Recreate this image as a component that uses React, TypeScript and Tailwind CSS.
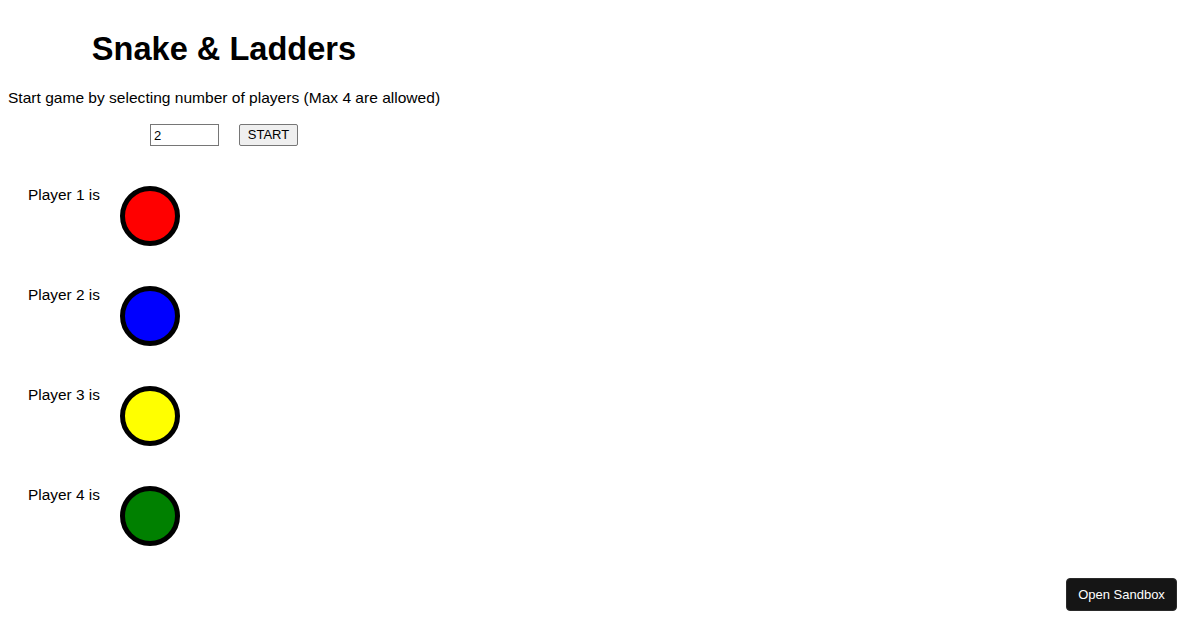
import { useState } from "react";

const PLAYERS = [
  { id: 1, color: "bg-[#ff0000]" },
  { id: 2, color: "bg-[#0000ff]" },
  { id: 3, color: "bg-[#ffff00]" },
  { id: 4, color: "bg-[#008000]" },
];

export default function App() {
  const [count, setCount] = useState("2");

  return (
    <div className="min-h-[630px] bg-white p-2 font-['Liberation_Sans',Arial,sans-serif] text-black">
      <div className="w-[432px] text-center">
        <h1 className="mt-[22px] text-[32.6px] leading-[37px] font-bold whitespace-nowrap">Snake &amp; Ladders</h1>
        <p className="mt-[22px] text-[15.55px] leading-[18px] whitespace-nowrap">
          Start game by selecting number of players (Max 4 are allowed)
        </p>
        <div className="mt-[17px] flex items-center justify-center gap-5">
          <input
            type="number"
            value={count}
            onChange={(e) => setCount(e.target.value)}
            className="h-[22px] w-[69px] border border-[#767676] px-[3px] text-[13px] outline-none [appearance:textfield]"
          />
          <button
            type="button"
            className="h-[22px] w-[59px] rounded-[2px] border border-[#767676] bg-[#efefef] pb-[1px] text-[13px] leading-none"
          >
            START
          </button>
        </div>
      </div>

      {/* Player tokens */}
      <div className="mt-10 flex flex-col gap-10 pl-5">
        {PLAYERS.map((p) => (
          <div key={p.id} className="flex items-start gap-5">
            <span className="w-[72px] text-[15.4px] leading-[18px] whitespace-nowrap">Player {p.id} is</span>
            <div className={`size-[60px] rounded-full border-[5px] border-black ${p.color}`} />
          </div>
        ))}
      </div>

      <button
        type="button"
        className="fixed right-[23px] bottom-[19px] h-[33px] w-[111px] rounded-[4px] border border-[#2a2a2a] bg-[#151515] text-[13px] text-white"
      >
        Open Sandbox
      </button>
    </div>
  );
}
